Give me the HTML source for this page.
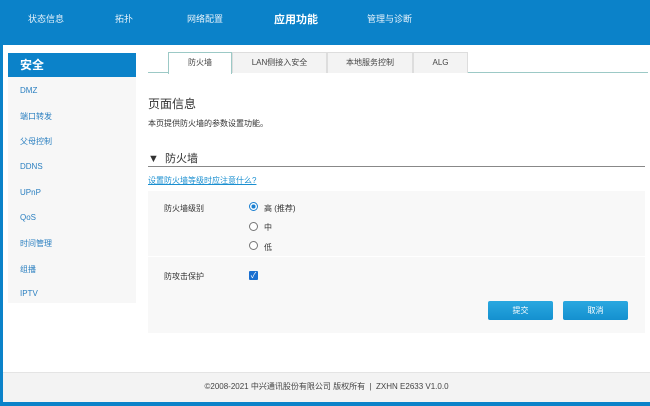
<!DOCTYPE html>
<html><head><meta charset="utf-8"><style>
*{margin:0;padding:0;box-sizing:border-box}
body{width:650px;height:406px;background:#0b82c9;font-family:"Liberation Sans","Noto Sans CJK SC",sans-serif;position:relative;overflow:hidden}
.a{position:absolute}
.nav{color:#e8f3fb;font-size:9px;top:12px}
.main{left:3px;top:45px;width:647px;height:327px;background:#fff}
.foot{left:3px;top:372px;width:647px;height:30px;background:#f3f3f3;border-top:1px solid #e4e4e4;font-size:8px;color:#444;text-align:center;line-height:28px}
.side{left:8px;top:53px;width:128px;height:250px;background:#f7f7f7}
.sh{left:8px;top:53px;width:128px;height:24px;background:#0b82c9;color:#fff;font-weight:bold;font-size:12px;line-height:24px;padding-left:12px}
.si{left:20px;font-size:8px;color:#2a7fc0}
.tab{top:52px;height:21px;border:1px solid #ddd;border-bottom:none;background:#f3f3f3;font-size:8px;color:#444;text-align:center;line-height:20px}
.btn{top:301px;width:65px;height:19px;background:linear-gradient(#2aa8e0,#1490cf);color:#fff;font-size:8px;text-align:center;line-height:19px;border-radius:2px}
.t8{font-size:8px;color:#333}
</style></head><body>
<div class="a nav" style="left:28px">状态信息</div>
<div class="a nav" style="left:115px">拓扑</div>
<div class="a nav" style="left:187px">网络配置</div>
<div class="a nav" style="left:274px;font-size:11px;font-weight:bold;color:#fff;top:11px">应用功能</div>
<div class="a nav" style="left:367px">管理与诊断</div>
<div class="a main"></div>
<div class="a side"></div>
<div class="a sh">安全</div>
<div class="a si" style="top:86px">DMZ</div>
<div class="a si" style="top:111px">端口转发</div>
<div class="a si" style="top:136px">父母控制</div>
<div class="a si" style="top:162px">DDNS</div>
<div class="a si" style="top:188px">UPnP</div>
<div class="a si" style="top:213px">QoS</div>
<div class="a si" style="top:238px">时间管理</div>
<div class="a si" style="top:264px">组播</div>
<div class="a si" style="top:289px">IPTV</div>
<div class="a" style="left:148px;top:72px;width:500px;height:1px;background:#9cc9c6"></div>
<div class="a tab" style="left:168px;width:64px;background:#fff;height:22px;border-color:#9cc9c6">防火墙</div>
<div class="a tab" style="left:232px;width:95px">LAN侧接入安全</div>
<div class="a tab" style="left:327px;width:86px">本地服务控制</div>
<div class="a tab" style="left:413px;width:55px">ALG</div>
<div class="a" style="left:148px;top:95px;font-size:12px;color:#333">页面信息</div>
<div class="a t8" style="left:148px;top:118px">本页提供防火墙的参数设置功能。</div>
<div class="a" style="left:148px;top:150px;font-size:11px;color:#333">▼&nbsp;&nbsp;防火墙</div>
<div class="a" style="left:148px;top:166px;width:497px;height:1px;background:#888"></div>
<div class="a" style="left:148px;top:175px;font-size:8px;color:#1a8fd0;text-decoration:underline">设置防火墙等级时应注意什么?</div>
<div class="a" style="left:148px;top:191px;width:497px;height:142px;background:#f8f8f8"></div>
<div class="a" style="left:148px;top:256px;width:497px;height:1px;background:#fff"></div>
<div class="a t8" style="left:164px;top:203px">防火墙级别</div>
<div class="a" style="left:249px;top:202px;width:9px;height:9px;border-radius:50%;border:1px solid #1a7fd0;background:radial-gradient(#1a7fd0 40%,#fff 45%)"></div>
<div class="a t8" style="left:264px;top:203px">高 (推荐)</div>
<div class="a" style="left:249px;top:222px;width:9px;height:9px;border-radius:50%;border:1px solid #777;background:#fff"></div>
<div class="a t8" style="left:264px;top:222px">中</div>
<div class="a" style="left:249px;top:241px;width:9px;height:9px;border-radius:50%;border:1px solid #777;background:#fff"></div>
<div class="a t8" style="left:264px;top:242px">低</div>
<div class="a t8" style="left:164px;top:271px">防攻击保护</div>
<div class="a" style="left:249px;top:271px;width:9px;height:9px;background:#1a6fd0;border-radius:1px;color:#fff;font-size:8px;line-height:9px;text-align:center">✓</div>
<div class="a btn" style="left:488px">提交</div>
<div class="a btn" style="left:563px">取消</div>
<div class="a foot">©2008-2021 中兴通讯股份有限公司 版权所有 &nbsp;|&nbsp; ZXHN E2633 V1.0.0</div>
</body></html>
